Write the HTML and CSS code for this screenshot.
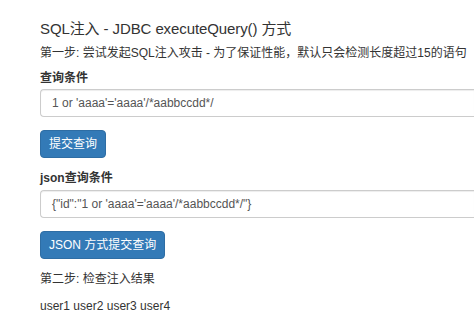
FILE: index.html
```html
<!DOCTYPE html>
<html lang="zh-CN">
<head>
<meta charset="utf-8">
<title>SQL注入 - JDBC executeQuery() 方式</title>
<link rel="stylesheet" href="styles.css">
</head>
<body>
<div class="page">
  <h3 class="title">SQL注入 - JDBC executeQuery() 方式</h3>
  <p class="step">第一步: 尝试发起SQL注入攻击 - 为了保证性能，默认只会检测长度超过15的语句</p>
  <label class="label">查询条件</label>
  <div class="input">1 or 'aaaa'='aaaa'/*aabbccdd*/</div>
  <div class="btn">提交查询</div>
  <label class="label label-2">json查询条件</label>
  <div class="input input-2">{"id":"1 or 'aaaa'='aaaa'/*aabbccdd*/"}</div>
  <div class="btn">JSON 方式提交查询</div>
  <p class="step step-2">第二步: 检查注入结果</p>
  <p class="result">user1 user2 user3 user4</p>
</div>
</body>
</html>
```
FILE: styles.css
```css
html, body {
  margin: 0;
  padding: 0;
  background: #ffffff;
  overflow: hidden;
}
body {
  width: 474px;
  height: 321px;
  font-family: "Liberation Sans", Arial, "Noto Sans CJK SC", sans-serif;
  color: #333333;
}
.page {
  box-sizing: border-box;
  width: 474px;
  display: flex;
  flex-direction: column;
  align-items: flex-start;
  padding-left: 40px;
}
.title {
  margin: 19px 0 0;
  font-size: 15px;
  letter-spacing: -0.1px;
  line-height: 20px;
  font-weight: normal;
  white-space: nowrap;
}
.step {
  margin: 6px 0 0;
  font-size: 12px;
  line-height: 16px;
  white-space: nowrap;
}
.label {
  margin-top: 9px;
  font-size: 12px;
  line-height: 16px;
  font-weight: bold;
}
.label-2 {
  margin-top: 12px;
}
.input {
  box-sizing: border-box;
  margin-top: 3px;
  width: 100%;
  height: 28px;
  padding: 0 11px;
  border: 1px solid #cccccc;
  border-right: none;
  border-radius: 4px 0 0 4px;
  box-shadow: inset 0 1px 1px rgba(0, 0, 0, 0.075);
  font-size: 12px;
  line-height: 26px;
  color: #555555;
  white-space: nowrap;
}
.input-2 {
  margin-top: 4px;
}
.btn {
  box-sizing: border-box;
  margin-top: 13px;
  height: 28px;
  padding: 0 8px;
  background: #337ab7;
  border: 1px solid #2e6da4;
  border-radius: 4px;
  color: #ffffff;
  font-size: 12px;
  line-height: 26px;
  white-space: nowrap;
}
.step-2 {
  margin-top: 12px;
}
.result {
  margin: 11px 0 0;
  font-size: 12px;
  line-height: 16px;
}
```
